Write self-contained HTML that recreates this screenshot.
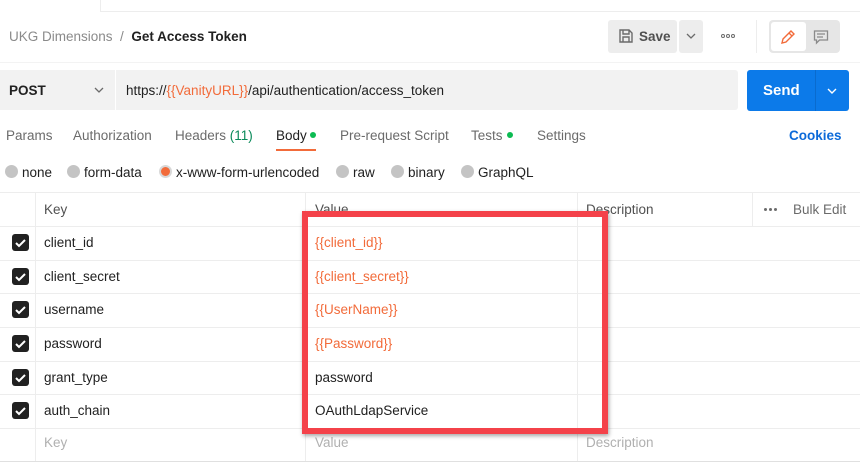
<!DOCTYPE html>
<html><head><style>
*{margin:0;padding:0;box-sizing:border-box}
body{width:860px;height:470px;overflow:hidden;background:#fff;font-family:"Liberation Sans",sans-serif;position:relative;color:#212121}
.a{position:absolute}
.t{font-size:13.5px;white-space:nowrap}
.g{color:#6b6b6b}
.o{color:#f26b3a}
.hl{position:absolute;height:1px;background:#ededed}
.vl{position:absolute;width:1px;background:#ededed}
.cb{position:absolute;left:12px;width:17px;height:17px;background:#212121;border-radius:3px}
.rad{position:absolute;top:165px;width:13px;height:13px;border-radius:50%;background:#c4c4c4}
.dot{position:absolute;width:4px;height:4px;border-radius:50%;border:1px solid #6b6b6b}
</style></head><body>
<div class="hl" style="top:11px;left:100px;width:760px"></div>
<div class="vl" style="left:100px;top:0;height:12px"></div>
<div class="a t" style="left:9px;top:29px;color:#8a8a8a">UKG Dimensions&nbsp; <span style="color:#8a8a8a">/</span>&nbsp; <b style="color:#212121">Get Access Token</b></div>
<div class="a" style="left:608px;top:20px;width:69px;height:33px;background:#ededed;border-radius:3px"></div>
<svg class="a" style="left:618px;top:28px" width="16" height="16" viewBox="0 0 16 16" fill="none" stroke="#6b6b6b" stroke-width="1.4"><path d="M2 2h9l3 3v9H2z M5 2v4h6V2 M5 14V9h6v5"/></svg>
<div class="a t" style="left:639px;top:29px;font-weight:bold;color:#505050">Save</div>
<div class="a" style="left:679px;top:20px;width:24px;height:33px;background:#ededed;border-radius:3px"></div>
<svg class="a" style="left:685px;top:32px" width="12" height="8"><path d="M2 2l4 4 4-4" stroke="#6b6b6b" fill="none" stroke-width="1.3"/></svg>
<div class="dot" style="left:721px;top:34px"></div><div class="dot" style="left:726px;top:34px"></div><div class="dot" style="left:731px;top:34px"></div>
<div class="vl" style="left:756px;top:20px;height:33px"></div>
<div class="a" style="left:769px;top:20px;width:71px;height:33px;background:#e6e6e6;border-radius:4px"></div>
<div class="a" style="left:771px;top:22px;width:35px;height:29px;background:#fff;border-radius:3px"></div>
<svg class="a" style="left:779px;top:28px" width="18" height="18" viewBox="0 0 18 18"><path d="M3 15l1-4 8-8 3 3-8 8z M10 5l3 3" stroke="#f26b3a" fill="none" stroke-width="1.4"/></svg>
<svg class="a" style="left:813px;top:29px" width="16" height="16" viewBox="0 0 16 16"><path d="M1.5 2h13v9h-8l-3 3v-3h-2z M4 5h8 M4 8h6" stroke="#8a8a8a" fill="none" stroke-width="1.3"/></svg>
<div class="hl" style="top:62px;left:0;width:860px;background:#f3f3f3"></div>
<div class="a" style="left:0;top:70px;width:115px;height:40px;background:#f2f2f2"></div>
<div class="a t" style="left:9px;top:83px;font-weight:bold">POST</div>
<svg class="a" style="left:93px;top:86px" width="12" height="8"><path d="M2 2l4 4 4-4" stroke="#6b6b6b" fill="none" stroke-width="1.3"/></svg>
<div class="a" style="left:116px;top:70px;width:622px;height:40px;background:#f2f2f2;border-radius:0 3px 3px 0"></div>
<div class="a t" style="left:126px;top:83px">https://<span class="o">{{VanityURL}}</span>/api/authentication/access_token</div>
<div class="a" style="left:747px;top:70px;width:102px;height:41px;background:#0c7ae9;border-radius:3px"></div>
<div class="vl" style="left:815px;top:70px;height:41px;background:#0a6bce"></div>
<div class="a t" style="left:763px;top:82px;color:#fff;font-weight:bold;font-size:15px">Send</div>
<svg class="a" style="left:826px;top:87px" width="12" height="8"><path d="M2 2l4 4 4-4" stroke="#fff" fill="none" stroke-width="1.4"/></svg>
<div class="a t g" style="left:6px;top:128px">Params</div>
<div class="a t g" style="left:73px;top:128px">Authorization</div>
<div class="a t g" style="left:175px;top:128px">Headers <span style="color:#0a8a5a">(11)</span></div>
<div class="a t" style="left:276px;top:128px">Body</div>
<div class="a" style="left:310px;top:132px;width:6px;height:6px;border-radius:50%;background:#0cbb52"></div>
<div class="a" style="left:276px;top:149px;width:40px;height:2px;background:#f26b3a"></div>
<div class="a t g" style="left:340px;top:128px">Pre-request Script</div>
<div class="a t g" style="left:471px;top:128px">Tests</div>
<div class="a" style="left:507px;top:132px;width:6px;height:6px;border-radius:50%;background:#0cbb52"></div>
<div class="a t g" style="left:537px;top:128px">Settings</div>
<div class="a t" style="left:789px;top:128px;color:#0c6ad9;font-weight:bold">Cookies</div>
<div class="rad" style="left:5px"></div><div class="a t" style="left:22px;top:165px">none</div>
<div class="rad" style="left:67px"></div><div class="a t" style="left:84px;top:165px">form-data</div>
<div class="rad" style="left:159px;background:#f26b3a;border:2px solid #d8d8d8"></div><div class="a t" style="left:176px;top:165px">x-www-form-urlencoded</div>
<div class="rad" style="left:336px"></div><div class="a t" style="left:353px;top:165px">raw</div>
<div class="rad" style="left:391px"></div><div class="a t" style="left:408px;top:165px">binary</div>
<div class="rad" style="left:461px"></div><div class="a t" style="left:478px;top:165px">GraphQL</div>
<div class="hl" style="top:192px;left:0;width:860px"></div>
<div class="hl" style="top:226px;left:0;width:860px"></div>
<div class="hl" style="top:260px;left:0;width:860px"></div>
<div class="hl" style="top:293px;left:0;width:860px"></div>
<div class="hl" style="top:327px;left:0;width:860px"></div>
<div class="hl" style="top:361px;left:0;width:860px"></div>
<div class="hl" style="top:394px;left:0;width:860px"></div>
<div class="hl" style="top:428px;left:0;width:860px"></div>
<div class="hl" style="top:461px;left:0;width:860px;background:#e0e0e0"></div>
<div class="vl" style="left:35px;top:193px;height:268px"></div>
<div class="vl" style="left:305px;top:193px;height:268px"></div>
<div class="vl" style="left:577px;top:193px;height:268px"></div>
<div class="vl" style="left:752px;top:193px;height:34px"></div>
<div class="a t" style="left:44px;top:202px;color:#505050">Key</div>
<div class="a t" style="left:315px;top:202px;color:#505050">Value</div>
<div class="a t" style="left:586px;top:202px;color:#505050">Description</div>
<div class="a" style="left:764px;top:208px;width:3px;height:3px;border-radius:50%;background:#6b6b6b"></div>
<div class="a" style="left:769px;top:208px;width:3px;height:3px;border-radius:50%;background:#6b6b6b"></div>
<div class="a" style="left:774px;top:208px;width:3px;height:3px;border-radius:50%;background:#6b6b6b"></div>
<div class="a t" style="left:793px;top:202px;color:#6b6b6b">Bulk Edit</div>
<div class="cb" style="top:234px"></div><div class="cb" style="top:268px"></div><div class="cb" style="top:301px"></div><div class="cb" style="top:335px"></div><div class="cb" style="top:369px"></div><div class="cb" style="top:402px"></div>
<svg class="a" style="left:12px;top:234px" width="17" height="185"><g stroke="#fff" stroke-width="2" fill="none"><path d="M4 9l3 3 6-6"/><path d="M4 43l3 3 6-6"/><path d="M4 76l3 3 6-6"/><path d="M4 110l3 3 6-6"/><path d="M4 144l3 3 6-6"/><path d="M4 177l3 3 6-6"/></g></svg>
<div class="a t" style="left:44px;top:235px">client_id</div>
<div class="a t" style="left:44px;top:269px">client_secret</div>
<div class="a t" style="left:44px;top:302px">username</div>
<div class="a t" style="left:44px;top:336px">password</div>
<div class="a t" style="left:44px;top:370px">grant_type</div>
<div class="a t" style="left:44px;top:403px">auth_chain</div>
<div class="a t" style="left:44px;top:435px;color:#b0b0b0">Key</div>
<div class="a t o" style="left:315px;top:235px">{{client_id}}</div>
<div class="a t o" style="left:315px;top:269px">{{client_secret}}</div>
<div class="a t o" style="left:315px;top:302px">{{UserName}}</div>
<div class="a t o" style="left:315px;top:336px">{{Password}}</div>
<div class="a t" style="left:315px;top:370px">password</div>
<div class="a t" style="left:315px;top:403px">OAuthLdapService</div>
<div class="a t" style="left:315px;top:435px;color:#b0b0b0">Value</div>
<div class="a t" style="left:586px;top:435px;color:#b0b0b0">Description</div>
<div class="a" style="left:302px;top:211px;width:306px;height:223px;border:6px solid #f4424a;box-shadow:1px 2px 4px rgba(0,0,0,.35)"></div>
</body></html>
